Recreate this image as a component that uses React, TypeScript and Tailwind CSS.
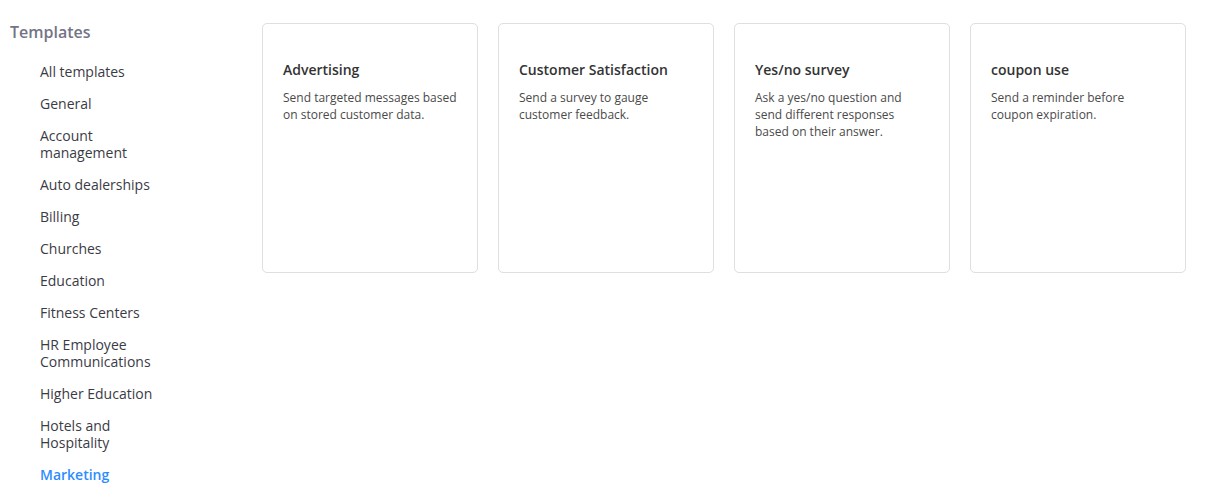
import React from 'react';

interface Template {
  id: string;
  title: string;
  description: string;
}

const categories = [
  'All templates',
  'General',
  'Account management',
  'Auto dealerships',
  'Billing',
  'Churches',
  'Education',
  'Fitness Centers',
  'HR Employee Communications',
  'Higher Education',
  'Hotels and Hospitality',
  'Marketing',
];

const templates: Template[] = [
  { id: 'adv', title: 'Advertising', description: 'Send targeted messages based on stored customer data.' },
  { id: 'csat', title: 'Customer Satisfaction', description: 'Send a survey to gauge customer feedback.' },
  { id: 'yesno', title: 'Yes/no survey', description: 'Ask a yes/no question and send different responses based on their answer.' },
  { id: 'coupon', title: 'coupon use', description: 'Send a reminder before coupon expiration.' },
];

const App: React.FC = () => {
  const active = 'Marketing';

  return (
    <div className="flex min-h-[493px] bg-white font-['Open_Sans',sans-serif]">
      <aside className="w-[262px] shrink-0 pl-[10px] pt-[21px]">
        <h2 className="text-[16px] leading-[22px] font-semibold text-[#747487]">Templates</h2>
        <ul className="mt-[20px] ml-[30px] flex flex-col gap-[15px]">
          {categories.map((cat) => (
            <li
              key={cat}
              className={`w-[122px] text-[14px] leading-[17px] ${cat === active ? 'text-[#2d8cff] font-semibold' : 'text-[#3b3b45]'}`}
            >
              {cat}
            </li>
          ))}
        </ul>
      </aside>

      <main className="pt-[23px]">
        <div className="flex gap-5">
          {templates.map((t) => (
            <div key={t.id} className="w-[216px] h-[250px] border border-[#dedee3] rounded-[5px] bg-white px-5 pt-[36px]">
              <h3 className="text-[14px] leading-[20px] font-semibold text-[#333]">{t.title}</h3>
              <p className="mt-[9px] text-[12px] leading-[17px] text-[#4a4a4a]">{t.description}</p>
            </div>
          ))}
        </div>
      </main>
    </div>
  );
};

export default App;
